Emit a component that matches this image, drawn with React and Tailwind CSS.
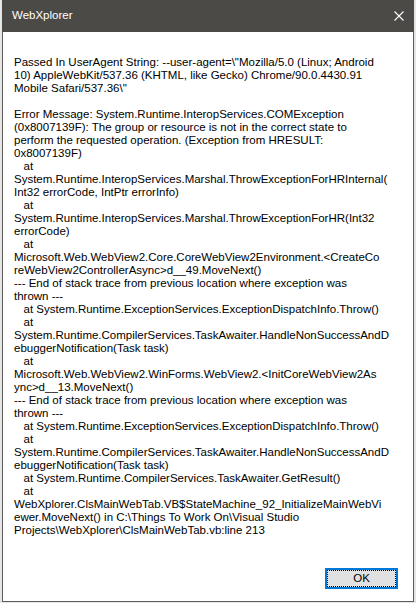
const lines = [
  'Passed In UserAgent String: --user-agent=\\"Mozilla/5.0 (Linux; Android',
  '10) AppleWebKit/537.36 (KHTML, like Gecko) Chrome/90.0.4430.91',
  'Mobile Safari/537.36\\"',
  '',
  'Error Message: System.Runtime.InteropServices.COMException',
  '(0x8007139F): The group or resource is not in the correct state to',
  'perform the requested operation. (Exception from HRESULT:',
  '0x8007139F)',
  '   at',
  'System.Runtime.InteropServices.Marshal.ThrowExceptionForHRInternal(',
  'Int32 errorCode, IntPtr errorInfo)',
  '   at',
  'System.Runtime.InteropServices.Marshal.ThrowExceptionForHR(Int32',
  'errorCode)',
  '   at',
  'Microsoft.Web.WebView2.Core.CoreWebView2Environment.<CreateCo',
  'reWebView2ControllerAsync>d__49.MoveNext()',
  '--- End of stack trace from previous location where exception was',
  'thrown ---',
  '   at System.Runtime.ExceptionServices.ExceptionDispatchInfo.Throw()',
  '   at',
  'System.Runtime.CompilerServices.TaskAwaiter.HandleNonSuccessAndD',
  'ebuggerNotification(Task task)',
  '   at',
  'Microsoft.Web.WebView2.WinForms.WebView2.<InitCoreWebView2As',
  'ync>d__13.MoveNext()',
  '--- End of stack trace from previous location where exception was',
  'thrown ---',
  '   at System.Runtime.ExceptionServices.ExceptionDispatchInfo.Throw()',
  '   at',
  'System.Runtime.CompilerServices.TaskAwaiter.HandleNonSuccessAndD',
  'ebuggerNotification(Task task)',
  '   at System.Runtime.CompilerServices.TaskAwaiter.GetResult()',
  '   at',
  'WebXplorer.ClsMainWebTab.VB$StateMachine_92_InitializeMainWebVi',
  'ewer.MoveNext() in C:\\Things To Work On\\Visual Studio',
  'Projects\\WebXplorer\\ClsMainWebTab.vb:line 213',
];

const App = () => {
  return (
    <div className="w-[416px] h-[603px] bg-[#e6e6e6] pl-[2px] overflow-hidden font-['Liberation_Sans',sans-serif]">
      <div className="w-[412px] h-[602px] flex flex-col bg-white border-x border-b border-[#5c5c5a]">
        {/* Title bar */}
        <div className="h-[32px] -mx-px bg-[#4b4a47] flex items-center justify-between pl-[10px] pr-[10px] text-white shrink-0">
          <span className="text-[11.5px]">WebXplorer</span>
          <svg width="10" height="10" viewBox="0 0 10 10" className="block">
            <path d="M0.5 0.5 L9.5 9.5 M9.5 0.5 L0.5 9.5" stroke="white" strokeWidth="1.1" fill="none" />
          </svg>
        </div>

        {/* Message */}
        <div className="flex-1 pt-[24px] pl-[11px] text-[11.5px] leading-[13px] text-black">
          {lines.map((line, i) => (
            <div key={i} className="whitespace-pre h-[13px]">
              {line}
            </div>
          ))}
        </div>

        {/* Buttons */}
        <div className="flex justify-end pr-[15px] pb-[12px]">
          <button className="w-[73px] h-[21px] border-2 border-[#0078d7] bg-[#e1e1e1] p-0">
            <div className="w-full h-full border border-dotted border-black flex items-center justify-center text-[11.5px] text-black">
              OK
            </div>
          </button>
        </div>
      </div>
    </div>
  );
};

export default App;
